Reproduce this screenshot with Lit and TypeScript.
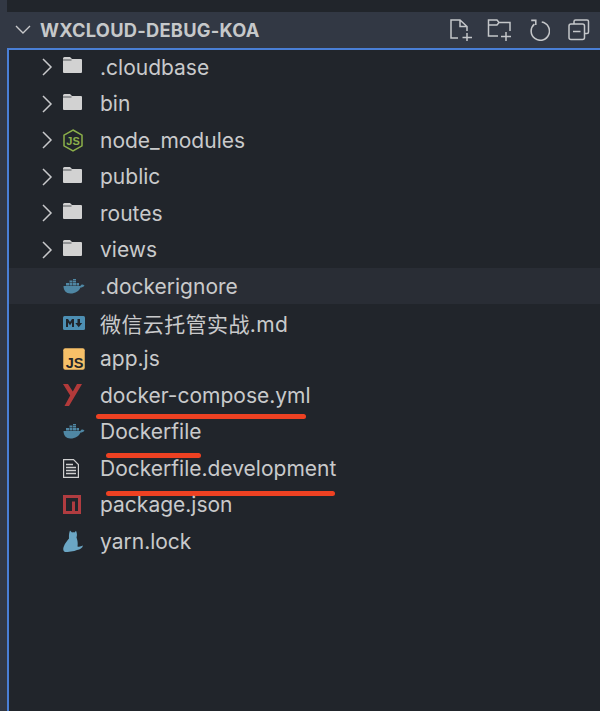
import { LitElement, html, css } from "lit";
import { customElement } from "lit/decorators.js";

const chevron = html`<svg class="chev" viewBox="0 0 12 20" width="12" height="20"><path d="M2 2l8 8-8 8" fill="none" stroke="#c8c9cb" stroke-width="1.5"/></svg>`;
const folder = html`<svg class="ic up" viewBox="0 0 19 16" width="19" height="16"><path d="M0 1.500Q0 0 1.500 0H7L9 2H18Q19 2 19 3V15Q19 16 18 16H1Q0 16 0 15Z" fill="#d2d2d2"/><path d="M0 3H8.500" stroke="#21252b" stroke-width=".7"/></svg>`;
const node = html`<svg class="ic" viewBox="0 0 20 23" width="20" height="23"><path d="M10 1L19 6.200V16.800L10 22 1 16.800V6.200Z" fill="none" stroke="#8cb04a" stroke-width="1.500"/><text x="10" y="15.500" text-anchor="middle" class="njs">JS</text></svg>`;
const docker = html`<svg class="ic" viewBox="0 0 22 15" width="22" height="15"><path d="M0.500 7H17.500C18 5.500 19.500 5 21.500 6.500 20.500 8 19 8.500 17.500 8.500 16 12 12.500 14.500 7.500 14.500 3 14.500 .5 11.500 .5 7Z" fill="#4f87a4"/><path d="M3 4h3v2.500H3zM6.500 4h3v2.500h-3zM10 4h3v2.500h-3zM6.500 1.500h3V3.500h-3zM10 1.500h3V3.500h-3zM10-.5h3V1h-3zM13.500 4h2.500v2.500h-2.500z" fill="#4f87a4"/></svg>`;
const md = html`<svg class="ic" viewBox="0 0 22 14" width="22" height="14"><rect width="22" height="14" rx="1.500" fill="#4d8fb3"/><path d="M3 11V3H5L7 6 9 3H11V11H9V6.500L7 9.200 5 6.500V11Z" fill="#21252b"/><path d="M14.500 3H17V7H19.200L15.750 11.200 12.300 7H14.500Z" fill="#21252b"/></svg>`;
const js = html`<svg class="ic" viewBox="0 0 22 22" width="22" height="22"><rect width="21.500" height="21.500" x=".25" y=".25" rx="2" fill="#f7c068"/><text x="20.500" y="19.500" text-anchor="end" class="jsx">JS</text></svg>`;
const yml = html`<svg class="ic" viewBox="0 0 19 22" width="19" height="22"><path d="M0 0H5L9.800 7.500 14 0H19L6 22H1.500L7.200 11.500Z" fill="#b23a3a"/></svg>`;
const doc = html`<svg class="ic" viewBox="0 0 16 19" width="16" height="19"><path d="M.6 .6H10.500L15.400 5.500V18.400H.6Z" fill="none" stroke="#d0d0d0" stroke-width="1.200"/><path d="M3 5.500H10M3 8.500H13M3 11.500H13M3 14.500H13" stroke="#d0d0d0" stroke-width="1.500"/></svg>`;
const npm = html`<svg class="ic" viewBox="0 0 18 19" width="18" height="19"><path fill-rule="evenodd" d="M0 0H18V19H0ZM3 3V16H9V6.500H12V16H15V3Z" fill="#b03c40"/></svg>`;
const yarn = html`<svg class="ic" viewBox="0 0 20 22" width="20" height="22"><path d="M7 .5L9 2.500C10 2.200 11 2.200 11.500 2.500L13 .8C14 3 14.300 5 13.500 7.500 14.500 10 15 13 14.500 16.500 16.500 17 18 16.500 20 15.500 19.500 18 17 19.500 14 20 11 21.500 5 22 2 22 .3 21.500 -.3 19 .8 16.500 2 13 4.500 10.500 6 8.500 5.800 6 6 3 7 .5Z" fill="#6ba6c4"/></svg>`;

type Row = { name: string; icon: unknown; dir?: boolean; hover?: boolean; mark?: string; cjk?: boolean };
const rows: Row[] = [
  { name: ".cloudbase", icon: folder, dir: true },
  { name: "bin", icon: folder, dir: true },
  { name: "node_modules", icon: node, dir: true },
  { name: "public", icon: folder, dir: true },
  { name: "routes", icon: folder, dir: true },
  { name: "views", icon: folder, dir: true },
  { name: ".dockerignore", icon: docker, hover: true },
  { name: "微信云托管实战.md", icon: md, cjk: true },
  { name: "app.js", icon: js },
  { name: "docker-compose.yml", icon: yml, mark: "m1" },
  { name: "Dockerfile", icon: docker, mark: "m2" },
  { name: "Dockerfile.development", icon: doc, mark: "m3" },
  { name: "package.json", icon: npm },
  { name: "yarn.lock", icon: yarn },
];

@customElement("app-root")
export class AppRoot extends LitElement {
  static styles = css`
    :host { display: block; width: 600px; height: 711px; overflow: hidden; background: #323844;
      font-family: Inter, "Noto Sans CJK SC", sans-serif; }
    .top { height: 12px; margin-left: 7px; background: #21252b; }
    .head { height: 36px; display: flex; align-items: center; padding-left: 15px; }
    .head .down { display: block; margin-right: 9px; }
    .title { font-size: 18.300px; font-weight: 700; color: #c6c8ca; letter-spacing: .25px; flex: 1; }
    .tools { display: flex; align-items: center; padding-right: 10px; }
    .tools svg { display: block; }
    .t2 { margin-left: 14px; }
    .t3 { margin-left: 15px; }
    .t4 { margin-left: 18px; }
    .tree { margin-left: 6.500px; height: 663px; box-sizing: border-box; background: #21252b;
      border-left: 2px solid #4a7fd6; border-top: 2px solid #4a7fd6; }
    .rows { margin-top: -1px; }
    .row { height: 36.470px; display: flex; align-items: center; position: relative; }
    .row.hover { background: #292d35; }
    .cw { width: 30.500px; flex: none; }
    .chev { display: block; margin-left: 32px; width: 12px; }
    .slot { width: 37px; margin-left: 24px; flex: none; display: flex; justify-content: flex-start; }
    .ic { display: block; }
    .up { transform: translateY(-2px); }
    .name { font-size: 21px; color: #c9cacb; white-space: nowrap; }
    .name.cjk { letter-spacing: .4px; }
    .njs { font: 700 11px "Liberation Sans", sans-serif; fill: #8cb04a; }
    .jsx { font: 700 14.500px "Liberation Sans", sans-serif; fill: #23252a; }
    .mark { position: absolute; height: 5px; border-radius: 2.500px; background: #ee4122; }
    .m1 { left: 87.500px; width: 210px; top: 36.800px; }
    .m2 { left: 97px; width: 95px; top: 39.300px; }
    .m3 { left: 97px; width: 229px; top: 40.800px; }
  `;

  renderRow(r: Row) {
    return html`<div class="row ${r.hover ? "hover" : ""}">
      <div class="cw">${r.dir ? chevron : ""}</div>
      <div class="slot">${r.icon}</div>
      <span class="name ${r.cjk ? "cjk" : ""}">${r.name}</span>
      ${r.mark ? html`<div class="mark ${r.mark}"></div>` : ""}
    </div>`;
  }

  render() {
    return html`
      <div class="top"></div>
      <div class="head">
        <svg class="down" viewBox="0 0 16 10" width="16" height="10"><path d="M1 1l7 7 7-7" fill="none" stroke="#c8c9cb" stroke-width="1.400"/></svg>
        <span class="title">WXCLOUD-DEBUG-KOA</span>
        <div class="tools">
          <svg viewBox="0 0 24 24" width="24" height="24" fill="none" stroke="#c4c6c9" stroke-width="1.500"><path d="M9 20H2V2H11L18 8.500V13M11 2V8.500H18M18 15V23M13.500 19.500H23" /></svg>
          <svg class="t2" viewBox="0 0 26 24" width="26" height="24" fill="none" stroke="#c4c6c9" stroke-width="1.500"><path d="M11 18H1.500V2H10L12 4.500H23V13M1.500 7H10L12 4.500M19 14V23M14 18.500H24"/></svg>
          <svg class="t3" viewBox="0 0 24 24" width="22" height="22" fill="none" stroke="#c4c6c9" stroke-width="1.700"><path d="M7 5.500A10 10 0 1 0 15 3.300M3.500 1.500H8.500V6.500"/></svg>
          <svg class="t4" viewBox="0 0 22 22" width="22" height="22" fill="none" stroke="#c4c6c9" stroke-width="1.500"><path d="M6 5V2.500Q6 1 7.500 1H19Q20.500 1 20.500 2.500V13Q20.500 14.500 19 14.500H16.500"/><rect x="1" y="5" width="15.500" height="15.500" rx="2"/><path d="M5 12.500H12.500"/></svg>
        </div>
      </div>
      <div class="tree"><div class="rows">${rows.map((r) => this.renderRow(r))}</div></div>
    `;
  }
}
